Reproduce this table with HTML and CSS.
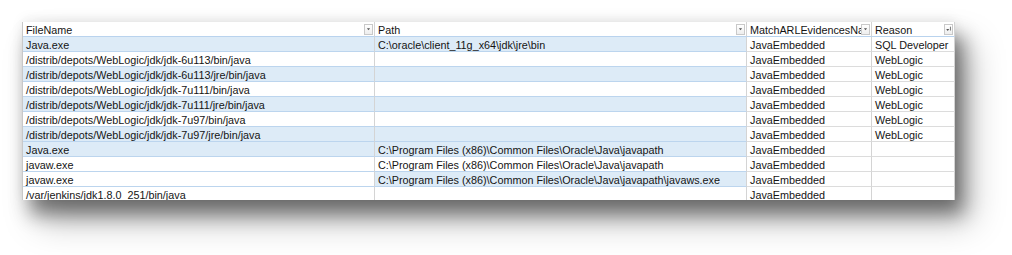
FILE: index.html
```html
<!DOCTYPE html>
<html>
<head>
<meta charset="utf-8">
<link rel="stylesheet" href="styles.css">
</head>
<body>
<div class="sheet">
  <div class="grid">
    <div class="hd c1"><span>FileName</span><span class="fb"><svg viewBox="0 0 9 10"><path d="M2.5 4h4l-2 2.5z" fill="#555"/></svg></span></div>
    <div class="hd c2"><span>Path</span><span class="fb"><svg viewBox="0 0 9 10"><path d="M2.5 4h4l-2 2.5z" fill="#555"/></svg></span></div>
    <div class="hd c3"><span class="clip">MatchARLEvidencesName</span><span class="fb"><svg viewBox="0 0 9 10"><path d="M2.5 4h4l-2 2.5z" fill="#555"/></svg></span></div>
    <div class="hd c4"><span>Reason</span><span class="fb"><svg viewBox="0 0 9 10"><path d="M1.5 5h4l-2 2.5z" fill="#555"/><path d="M7 2v5" stroke="#555" stroke-width="1"/></svg></span></div>

    <div class="c t b">Java.exe</div><div class="c t b">C:\oracle\client_11g_x64\jdk\jre\bin</div><div class="c g">JavaEmbedded</div><div class="c g">SQL Developer</div>
    <div class="c t">/distrib/depots/WebLogic/jdk/jdk-6u113/bin/java</div><div class="c t"></div><div class="c g">JavaEmbedded</div><div class="c g">WebLogic</div>
    <div class="c t b">/distrib/depots/WebLogic/jdk/jdk-6u113/jre/bin/java</div><div class="c t b"></div><div class="c g">JavaEmbedded</div><div class="c g">WebLogic</div>
    <div class="c t">/distrib/depots/WebLogic/jdk/jdk-7u111/bin/java</div><div class="c t"></div><div class="c g">JavaEmbedded</div><div class="c g">WebLogic</div>
    <div class="c t b">/distrib/depots/WebLogic/jdk/jdk-7u111/jre/bin/java</div><div class="c t b"></div><div class="c g">JavaEmbedded</div><div class="c g">WebLogic</div>
    <div class="c t">/distrib/depots/WebLogic/jdk/jdk-7u97/bin/java</div><div class="c t"></div><div class="c g">JavaEmbedded</div><div class="c g">WebLogic</div>
    <div class="c t b">/distrib/depots/WebLogic/jdk/jdk-7u97/jre/bin/java</div><div class="c t b"></div><div class="c g">JavaEmbedded</div><div class="c g">WebLogic</div>
    <div class="c t b">Java.exe</div><div class="c t b">C:\Program Files (x86)\Common Files\Oracle\Java\javapath</div><div class="c g">JavaEmbedded</div><div class="c g"></div>
    <div class="c t">javaw.exe</div><div class="c t">C:\Program Files (x86)\Common Files\Oracle\Java\javapath</div><div class="c g">JavaEmbedded</div><div class="c g"></div>
    <div class="c t">javaw.exe</div><div class="c t b">C:\Program Files (x86)\Common Files\Oracle\Java\javapath\javaws.exe</div><div class="c g">JavaEmbedded</div><div class="c g"></div>
    <div class="c t">/var/jenkins/jdk1.8.0_251/bin/java</div><div class="c t"></div><div class="c g">JavaEmbedded</div><div class="c g"></div>
  </div>
</div>
</body>
</html>
```
FILE: styles.css
```css
html, body {
  margin: 0;
  padding: 0;
  background: #ffffff;
}
body {
  width: 1012px;
  height: 255px;
  overflow: hidden;
  font-family: "Liberation Sans", Arial, sans-serif;
  font-size: 10.8px;
  color: #141414;
}
.sheet {
  margin: 22px 0 0 22px;
  width: 933px;
  height: 178px;
  overflow: hidden;
  background: #fff;
  border-left: 1px solid #c8c8c8;
  box-sizing: border-box;
  box-shadow:
    8px 14px 18px rgba(0, 0, 0, 0.45),
    16px 22px 32px rgba(0, 0, 0, 0.25),
    0 -3px 12px rgba(0, 0, 0, 0.06);
}
.grid {
  display: grid;
  grid-template-columns: 352px 372px 125px 83px;
  grid-auto-rows: 15px;
}
.hd, .c {
  box-sizing: border-box;
  height: 15px;
  line-height: 17px;
  padding-left: 3px;
  white-space: nowrap;
  overflow: hidden;
  border-right: 1px solid #d4d4d4;
}
.hd {
  display: flex;
  align-items: center;
  justify-content: space-between;
  padding-right: 1px;
  border-bottom: 1px solid #b9d3ee;
  background: #fff;
}
.hd span:first-child {
  padding-top: 2px;
}
.hd .clip {
  overflow: hidden;
  flex: 1;
}
.fb {
  flex: none;
  width: 9px;
  height: 11px;
  box-sizing: border-box;
  border: 1px solid #c9c9c9;
  background: linear-gradient(#ffffff, #eeeeee);
  display: flex;
  align-items: center;
  justify-content: center;
}
.fb svg {
  width: 9px;
  height: 10px;
  display: block;
}
.c.t {
  border-bottom: 1px solid #bcd5ee;
}
.c.b {
  background: #ddebf7;
}
.c.g {
  border-bottom: 1px solid #dcdcdc;
}
```
